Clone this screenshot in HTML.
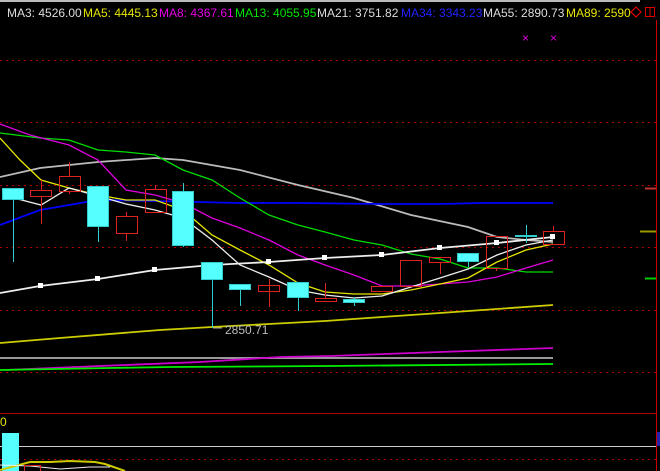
<!DOCTYPE html>
<html><head><meta charset="utf-8"><style>
html,body{margin:0;padding:0;background:#000;width:660px;height:471px;overflow:hidden}
svg{display:block}
text{font-family:"Liberation Sans",sans-serif;font-size:12px}
</style></head><body>
<svg width="660" height="471" viewBox="0 0 660 471" xmlns="http://www.w3.org/2000/svg" shape-rendering="crispEdges">
<rect width="660" height="471" fill="#000"/>
<rect x="0" y="0" width="640" height="2" fill="#bbb"/>
<!-- header -->
<g font-size="11.8">
<text x="7" y="17" fill="#ddd" font-size="11.8">MA3: 4526.00</text>
<text x="83" y="17" fill="#e6e600" font-size="11.8">MA5: 4445.13</text>
<text x="159" y="17" fill="#e600e6" font-size="11.8">MA8: 4367.61</text>
<text x="235" y="17" fill="#00e600" font-size="11.8">MA13: 4055.95</text>
<text x="317" y="17" fill="#ddd" font-size="11.8">MA21: 3751.82</text>
<text x="401" y="17" fill="#2222ff" font-size="11.8">MA34: 3343.23</text>
<text x="483" y="17" fill="#ddd" font-size="11.8">MA55: 2890.73</text>
<text x="566" y="17" fill="#e6e600" font-size="11.8">MA89: 2590</text>
</g>
<path d="M636 7 L641 12 L636 17 L631 12 Z" fill="none" stroke="#d00" stroke-width="1.2" shape-rendering="auto"/>
<rect x="645.5" y="7.5" width="9" height="9" fill="none" stroke="#d00"/>
<line x1="650" y1="7" x2="650" y2="17" stroke="#d00"/>
<text x="522" y="42" fill="#e000e0" font-size="10">×</text>
<text x="550" y="42" fill="#e000e0" font-size="10">×</text>
<!-- grid -->
<g stroke="#b00000" stroke-dasharray="2,4">
<line x1="0" y1="60.5" x2="656" y2="60.5"/><line x1="0" y1="122.5" x2="656" y2="122.5"/>
<line x1="0" y1="185.5" x2="656" y2="185.5"/><line x1="0" y1="247.5" x2="656" y2="247.5"/>
<line x1="0" y1="310.5" x2="656" y2="310.5"/><line x1="0" y1="372.5" x2="656" y2="372.5"/>
<line x1="0" y1="459.5" x2="656" y2="459.5"/>
</g>
<line x1="656.5" y1="20" x2="656.5" y2="471" stroke="#c00"/>
<line x1="0" y1="413.5" x2="656" y2="413.5" stroke="#a00"/>
<line x1="0" y1="446.5" x2="656" y2="446.5" stroke="#ccc"/>
<rect x="657" y="432" width="3" height="14" fill="#22a"/>
<line x1="645" y1="188.5" x2="656" y2="188.5" stroke="#b33" stroke-width="2"/>
<line x1="640" y1="231.5" x2="656" y2="231.5" stroke="#990" stroke-width="2"/>
<line x1="645" y1="278.5" x2="656" y2="278.5" stroke="#0c0" stroke-width="2"/>
<!-- MAs -->
<g fill="none" shape-rendering="auto" stroke-width="1.3">
<polyline stroke="#bbb" stroke-width="1.8" points="0,177 40,168 98,162 155,158 183,160 240,170 298,185 354,198 411,215 468,227 497,237 526,240 553,242"/>
<polyline stroke="#0000ff" stroke-width="1.8" points="0,225 40,210 98,200 155,201 240,203 300,203 380,204 440,204 480,203 553,203"/>
<polyline stroke="#00dd00" points="0,133 40,138 69,140 98,150 126,152 155,155 183,170 212,180 240,198 269,215 298,225 325,232 354,240 382,245 411,254 440,259 468,268 497,268 526,272 553,272"/>
<polyline stroke="#dd00dd" points="0,124 30,135 69,145 98,160 126,190 155,195 183,203 212,218 240,228 269,240 298,255 325,265 354,275 382,286 411,286 440,284 468,282 497,277 526,268 553,260"/>
<polyline stroke="#e6e600" points="0,138 20,160 41,180 69,188 98,195 126,200 155,200 183,210 212,235 240,250 269,265 298,283 325,292 354,294 382,294 411,290 440,284 468,278 497,262 526,250 553,244"/>
<polyline stroke="#eee" points="14,198 41,205 69,188 98,196 126,204 155,210 183,218 212,240 240,265 269,277 298,290 325,295 354,298 382,296 411,287 440,278 468,269 497,255 526,245 553,240"/>
<polyline stroke="#eee" stroke-width="1.8" points="0,293 40,286 98,279 155,270 212,265 269,262 325,258 382,255 440,248 497,243 553,237"/>
<polyline stroke="#cccc00" stroke-width="1.8" points="0,343 60,338 160,330 212,327 269,324 325,321 382,317 440,313 497,309 553,305"/>
<polyline stroke="#999" stroke-width="2" points="0,358 553,358"/>
<polyline stroke="#cc00cc" stroke-width="1.8" points="5,370 100,366 200,362 280,357 330,356 440,352 553,348"/>
<polyline stroke="#00ee00" stroke-width="1.8" points="0,370 110,368 170,367 330,366 553,364"/>
</g>
<g fill="#fff">
<rect x="38" y="283" width="5" height="5"/><rect x="95" y="276" width="5" height="5"/><rect x="152" y="267" width="5" height="5"/><rect x="209" y="262" width="5" height="5"/><rect x="266" y="259" width="5" height="5"/><rect x="322" y="255" width="5" height="5"/><rect x="379" y="252" width="5" height="5"/><rect x="437" y="245" width="5" height="5"/><rect x="494" y="240" width="5" height="5"/><rect x="550" y="234" width="5" height="5"/>
</g>
<!-- cyan candles -->
<g fill="#55ffff" stroke="#33cccc">
<line x1="13.5" y1="188" x2="13.5" y2="262"/><rect x="2.5" y="188.5" width="21" height="11"/>
<line x1="98.5" y1="186" x2="98.5" y2="242"/><rect x="87.5" y="186.5" width="21" height="40"/>
<line x1="183.5" y1="183" x2="183.5" y2="247"/><rect x="172.5" y="191.5" width="21" height="54"/>
<line x1="212.5" y1="262" x2="212.5" y2="328"/><rect x="201.5" y="262.5" width="21" height="17"/>
<line x1="240.5" y1="284" x2="240.5" y2="306"/><rect x="229.5" y="284.5" width="21" height="5"/>
<line x1="298.5" y1="282" x2="298.5" y2="311"/><rect x="287.5" y="282.5" width="21" height="15"/>
<line x1="354.5" y1="297" x2="354.5" y2="306"/><rect x="343.5" y="299.5" width="21" height="3"/>
<line x1="468.5" y1="253" x2="468.5" y2="267"/><rect x="457.5" y="253.5" width="21" height="8"/>
<line x1="526.5" y1="225" x2="526.5" y2="243"/><rect x="515.5" y="235.5" width="21" height="1"/>
</g>
<!-- red candles -->
<g fill="none" stroke="#dd2222">
<line x1="41.5" y1="180" x2="41.5" y2="190"/><line x1="41.5" y1="196" x2="41.5" y2="224"/><rect x="30.5" y="190.5" width="21" height="6"/>
<line x1="69.5" y1="162" x2="69.5" y2="176"/><line x1="69.5" y1="192" x2="69.5" y2="194"/><rect x="59.5" y="176.5" width="21" height="15"/>
<line x1="126.5" y1="212" x2="126.5" y2="216"/><line x1="126.5" y1="233" x2="126.5" y2="241"/><rect x="116.5" y="216.5" width="21" height="17"/>
<line x1="155.5" y1="185" x2="155.5" y2="189"/><rect x="145.5" y="189.5" width="21" height="23"/>
<line x1="269.5" y1="279" x2="269.5" y2="307"/><rect x="258.5" y="285.5" width="21" height="6"/>
<line x1="325.5" y1="283" x2="325.5" y2="298"/><rect x="315.5" y="298.5" width="21" height="3"/>
<rect x="371.5" y="286.5" width="21" height="5"/>
<rect x="400.5" y="260.5" width="21" height="26"/>
<line x1="440.5" y1="262" x2="440.5" y2="274"/><rect x="429.5" y="257.5" width="21" height="5"/>
<line x1="496.5" y1="268" x2="496.5" y2="271"/><rect x="486.5" y="236.5" width="21" height="32"/>
<line x1="553.5" y1="226" x2="553.5" y2="231"/><rect x="543.5" y="231.5" width="21" height="13"/>
</g>
<line x1="213" y1="328" x2="222" y2="328" stroke="#aaa"/>
<text x="225" y="334" fill="#bbb" font-size="11">2850.71</text>
<!-- lower panel -->
<text x="0" y="426" fill="#e6e600" font-size="11">0</text>
<rect x="2" y="433" width="17" height="38" fill="#55ffff"/>
<g fill="none" shape-rendering="auto">
<polyline stroke="#cccc00" stroke-width="2" points="0,470 30,462 50,462 70,461 95,462 105,464 125,471"/>
<polyline stroke="#eee" points="0,465 30,466 60,469 90,467 110,467"/>
</g>
<rect x="24.5" y="465.5" width="16" height="6" fill="none" stroke="#d22"/>
</svg>
</body></html>
